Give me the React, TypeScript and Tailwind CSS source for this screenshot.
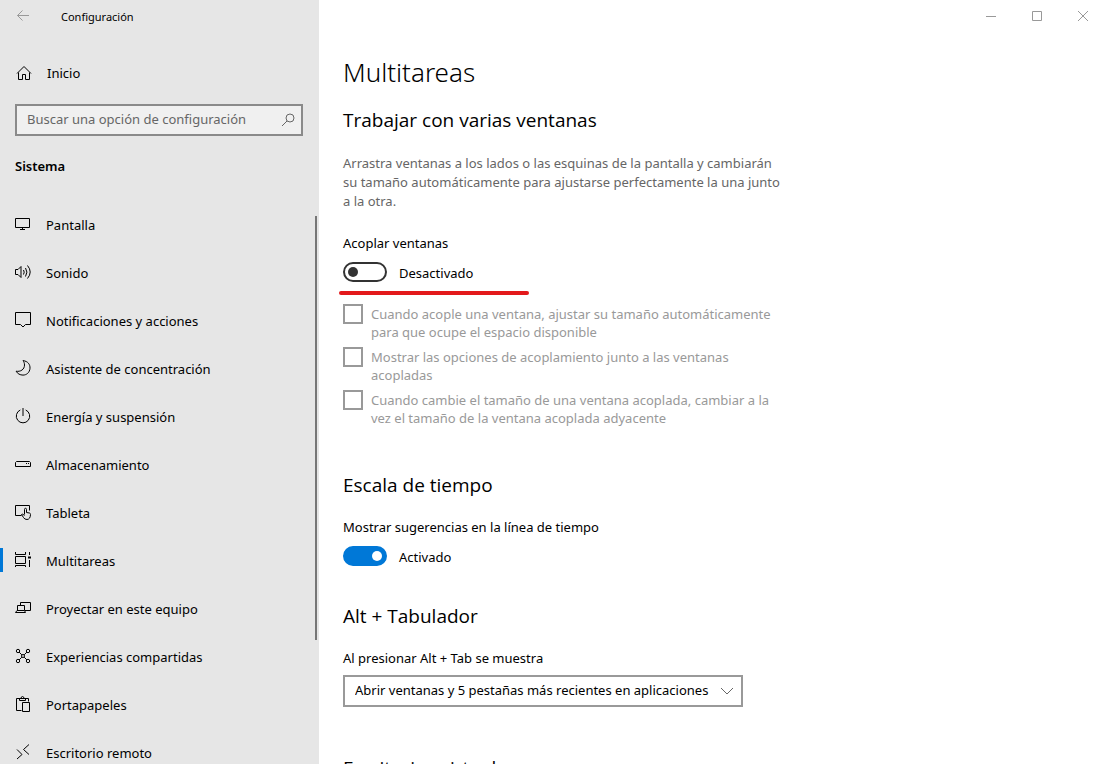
import { useState, type ReactNode } from "react";

const Icon = ({ children, className = "" }: { children: ReactNode; className?: string }) => (
  <svg
    viewBox="0 0 16 16"
    className={`w-4 h-4 shrink-0 ${className}`}
    fill="none"
    stroke="currentColor"
    strokeWidth="1"
    aria-hidden="true"
  >
    {children}
  </svg>
);

const navItems = [
  {
    label: "Pantalla",
    icon: <path d="M.5 2.500h14v9H.5zM7.500 11.500v2M5 13.500h5" />,
  },
  {
    label: "Sonido",
    icon: <path d="M.5 5.500v5H3l3 3v-11l-3 3zM8.500 6q1.400 2 0 4.500M10.500 4q2.800 4 0 8.500M12.500 1.500q5.400 6.500 0 13" />,
  },
  {
    label: "Notificaciones y acciones",
    icon: <path d="M.5.500h15v12h-5L8 15l-2.500-2.500h-5z" />,
  },
  {
    label: "Asistente de concentración",
    icon: <path d="M8 .6c5 .6 7.200 4 7 7.600-.3 4.500-3.600 6.900-7 6.900-3 0-5.500-1.400-6.900-3.900C5.500 12 9.500 9.500 9.500 5c0-1.800-.6-3.300-1.500-4.400z" />,
  },
  {
    label: "Energía y suspensión",
    icon: <path d="M8 0v8M5.300 2a6.700 6.700 0 1 0 5.400 0" />,
  },
  {
    label: "Almacenamiento",
    icon: <path d="M1.500 5.500h13l1 1v4H.5v-4zM11 7.500h1M13 7.500h1" />,
  },
  {
    label: "Tableta",
    icon: <path d="M6.500 11.500h-6v-10h14v5M9.500 10.500v-5q0-1.200 1-1.200t1 1.200v3l3 .5q1 .3 1 1.500-.2 4.800-3.500 5-2.500 0-3.500-2l-2-3q1-1.200 3 1" />,
  },
  {
    label: "Multitareas",
    icon: (
      <>
        <path d="M.5 0v2.500h10V0M.5 4.500h10v7H.5zM.5 15v-1.500h10V15M14.500 0v3M14.500 8v7" />
        <path d="M13 4.500h3v2h-3z" fill="currentColor" stroke="none" />
      </>
    ),
  },
  {
    label: "Proyectar en este equipo",
    icon: <path d="M5.500 5V2.500h10v8H10M2.500 10.500v-5h7v5M.5 12.500h10l-1-2h-7.500z" />,
  },
  {
    label: "Experiencias compartidas",
    icon: (
      <>
        <circle cx="3" cy="3" r="1.700" />
        <circle cx="13" cy="3" r="1.700" />
        <circle cx="3" cy="13" r="1.700" />
        <circle cx="13" cy="13" r="1.700" />
        <circle cx="8" cy="8" r="1.500" />
        <path d="M4.100 4.100l2.800 2.800M11.900 4.100L9.100 6.900M4.100 11.900l2.800-2.800M11.900 11.900L9.100 9.100" />
      </>
    ),
  },
  {
    label: "Portapapeles",
    icon: <path d="M6.500 14.500h-5v-12h12v3M4.500 4.500v-2h1.500q0-2 1.500-2t1.500 2h1.500v2zM7.500 6.500h7v9h-7z" />,
  },
  {
    label: "Escritorio remoto",
    icon: <path d="M2 5.500l5 5-5 4.500M14 .5L8.500 5.500 14 10.500" />,
  },
];

const snapOptions = [
  "Cuando acople una ventana, ajustar su tamaño automáticamente para que ocupe el espacio disponible",
  "Mostrar las opciones de acoplamiento junto a las ventanas acopladas",
  "Cuando cambie el tamaño de una ventana acoplada, cambiar a la vez el tamaño de la ventana acoplada adyacente",
];

function Toggle({ id, on, onChange }: { id: string; on: boolean; onChange: (v: boolean) => void }) {
  return (
    <div className="flex items-start gap-3">
      <button
        type="button"
        role="switch"
        aria-checked={on}
        aria-labelledby={id}
        onClick={() => onChange(!on)}
        className={`flex items-center w-11 h-5 rounded-full border-2 ${
          on ? "justify-end pr-[3px] bg-[#0078d7] border-[#0078d7]" : "pl-[3px] bg-white border-[#333]"
        }`}
      >
        <span className={`w-2.5 h-2.5 rounded-full ${on ? "bg-white" : "bg-[#333]"}`} />
      </button>
      <span className="pt-px leading-5">{on ? "Activado" : "Desactivado"}</span>
    </div>
  );
}

function Sidebar() {
  const [active, setActive] = useState("Multitareas");

  return (
    <aside className="relative flex flex-col w-[319px] shrink-0 bg-[#e6e6e6] overflow-hidden">
      <div className="flex items-center h-8 shrink-0">
        <button type="button" aria-label="Atrás" className="flex items-center justify-center w-[46px] h-8 text-[#999]">
          <Icon>
            <path d="M14 7.500H2.500M7.500 2.500l-5 5 5 5" />
          </Icon>
        </button>
        <span className="pl-[15px] pt-0.5 text-[11px]">Configuración</span>
      </div>

      <a href="#inicio" className="flex items-center gap-[15px] h-12 mt-[17px] px-4 shrink-0">
        <Icon>
          <path d="M1 8.500L8 1.500l7 7M2.500 7.500v7h4v-5h3v5h4v-7" />
        </Icon>
        <span className="pt-0.5">Inicio</span>
      </a>

      <div className="flex items-center h-8 mt-[7px] ml-[15px] mr-4 shrink-0 border-2 border-[#8a8a8a] bg-[#f0f0f0]">
        <input
          type="text"
          aria-label="Buscar una opción de configuración"
          placeholder="Buscar una opción de configuración"
          className="flex-1 min-w-0 pl-2.5 bg-transparent outline-none placeholder:text-[#666]"
        />
        <Icon className="mr-[5px] text-[#666]">
          <circle cx="10" cy="6" r="4" />
          <path d="M7 9l-5 5" />
        </Icon>
      </div>

      <h2 className="mt-5 ml-[15px] leading-5 font-semibold shrink-0">Sistema</h2>

      <nav className="mt-6">
        {navItems.map((item) => (
          <a
            key={item.label}
            href="#"
            onClick={() => setActive(item.label)}
            aria-current={item.label === active ? "page" : undefined}
            className="flex items-center h-12"
          >
            <span className={`w-[3px] h-6 mr-3 ${item.label === active ? "bg-[#0078d7]" : ""}`} />
            <Icon>{item.icon}</Icon>
            <span className="ml-[15px] pt-1">{item.label}</span>
          </a>
        ))}
      </nav>

      {/* scroll thumb */}
      <div className="absolute right-0.5 top-[216px] w-0.5 h-[424px] bg-[#767676]" />
    </aside>
  );
}

export default function App() {
  const [snap, setSnap] = useState(false);
  const [timeline, setTimeline] = useState(true);

  return (
    <div className="flex h-screen overflow-hidden bg-white text-black text-[13px] font-['Segoe_UI','Noto_Sans',sans-serif]">
      <Sidebar />

      <main className="flex-1 min-w-0 overflow-hidden">
        <div className="flex justify-end gap-2.5 h-8 text-[#999]">
          <button type="button" aria-label="Minimizar" className="flex items-center justify-center w-9">
            <Icon>
              <path d="M3 8.500h10" />
            </Icon>
          </button>
          <button type="button" aria-label="Maximizar" className="flex items-center justify-center w-9">
            <Icon>
              <path d="M3.500 3.500h9v9h-9z" />
            </Icon>
          </button>
          <button type="button" aria-label="Cerrar" className="flex items-center justify-center w-9">
            <Icon>
              <path d="M3 3l10 10M13 3L3 13" />
            </Icon>
          </button>
        </div>

        <div className="pl-6 pr-4">
          <h1 className="mt-5 text-[26px] leading-10 font-light">Multitareas</h1>

          <section className="max-w-[440px]">
            <h2 className="mt-3.5 text-[19px] leading-7 font-['Segoe_UI','Open_Sans',sans-serif]">
              Trabajar con varias ventanas
            </h2>
            <p className="mt-5 leading-[19px] text-[#666]">
              Arrastra ventanas a los lados o las esquinas de la pantalla y cambiarán su tamaño automáticamente para
              ajustarse perfectamente la una junto a la otra.
            </p>
            <p id="snap-label" className="mt-[22px] mb-[9px] leading-5">Acoplar ventanas</p>
            <Toggle id="snap-label" on={snap} onChange={setSnap} />
            <div className="w-[190px] h-1 mt-2 -ml-1 rounded-full bg-[#e3191b]" />
            <div className="flex flex-col gap-1.5 mt-[9px]">
              {snapOptions.map((text) => (
                <label key={text} className="flex items-start gap-2 leading-[18px] text-[#999]">
                  <input
                    type="checkbox"
                    disabled={!snap}
                    className="appearance-none w-5 h-5 shrink-0 border-2 border-[#999] checked:bg-[#0078d7]"
                  />
                  <span className="pt-px">{text}</span>
                </label>
              ))}
            </div>
          </section>

          <section>
            <h2 className="mt-11 text-[19px] leading-7 font-['Segoe_UI','Open_Sans',sans-serif]">Escala de tiempo</h2>
            <p id="timeline-label" className="mt-[18px] mb-[9px] leading-5">
              Mostrar sugerencias en la línea de tiempo
            </p>
            <Toggle id="timeline-label" on={timeline} onChange={setTimeline} />
          </section>

          <section>
            <h2 className="mt-[35px] text-[19px] leading-7 font-['Segoe_UI','Open_Sans',sans-serif]">
              Alt + Tabulador
            </h2>
            <label htmlFor="alt-tab" className="block mt-[18px] mb-[7px] leading-5">
              Al presionar Alt + Tab se muestra
            </label>
            <div className="relative w-[400px] max-w-full">
              <select id="alt-tab" className="appearance-none w-full h-8 pl-2.5 pr-7 border-2 border-[#999] bg-white">
                <option>Abrir ventanas y 5 pestañas más recientes en aplicaciones</option>
                <option>Abrir ventanas y 3 pestañas más recientes en aplicaciones</option>
                <option>Abrir solo ventanas</option>
              </select>
              <Icon className="absolute right-2 top-2 pointer-events-none text-[#666]">
                <path d="M2 5l6 6 6-6" />
              </Icon>
            </div>
          </section>

          <section>
            <h2 className="mt-[47px] text-[19px] leading-7 font-['Segoe_UI','Open_Sans',sans-serif]">
              Escritorios virtuales
            </h2>
          </section>
        </div>
      </main>
    </div>
  );
}
